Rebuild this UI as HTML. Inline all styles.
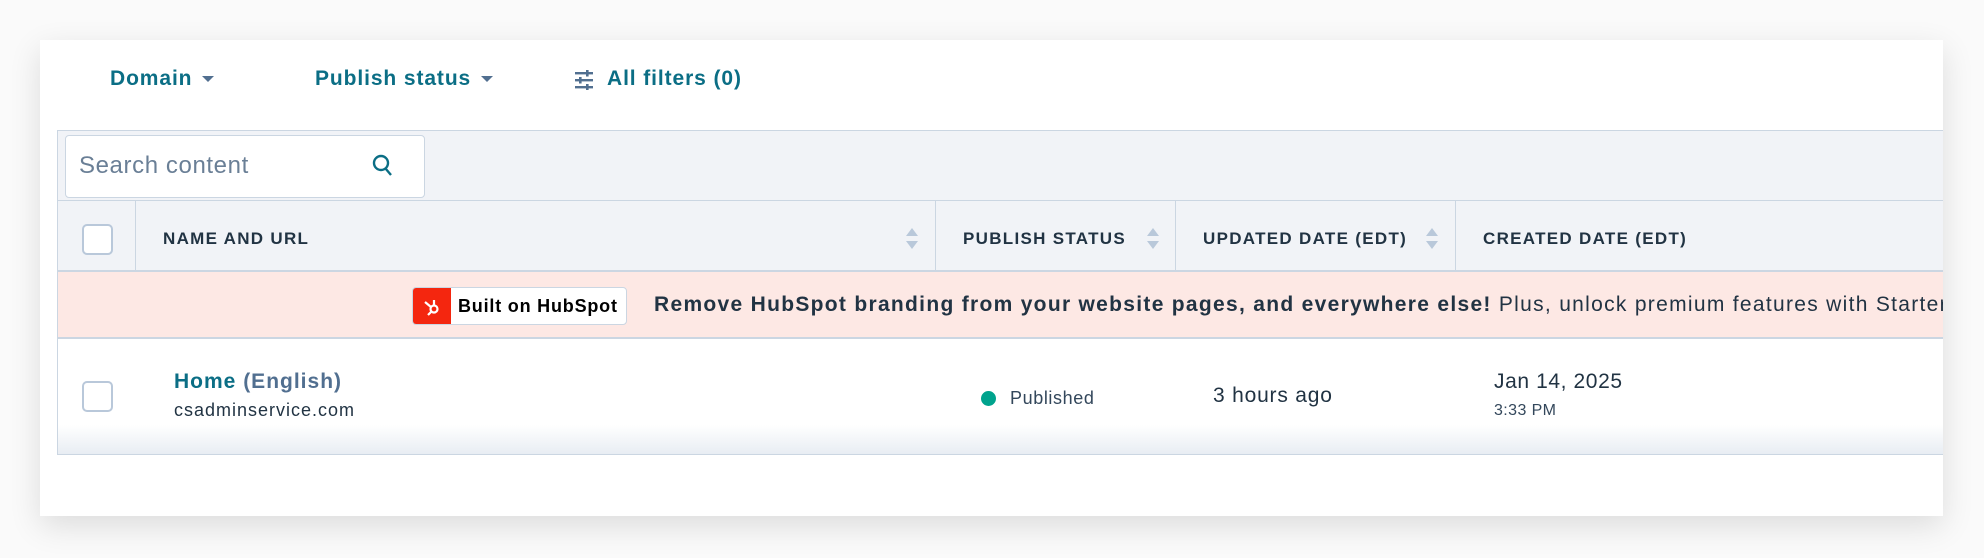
<!DOCTYPE html>
<html><head><meta charset="utf-8"><style>
*{margin:0;padding:0;box-sizing:border-box}
body{width:1984px;height:558px;background:#fafafa;font-family:"Liberation Sans",sans-serif;position:relative;overflow:hidden}
.card{position:absolute;left:40px;top:40px;width:1903px;height:476px;background:#fff;box-shadow:0 10px 30px rgba(0,0,0,.12)}
.a{position:absolute;white-space:nowrap}
.f{font-weight:bold;font-size:21px;color:#0b6e85;top:67px;letter-spacing:.9px}
.caret{display:inline-block;width:0;height:0;border-left:6px solid transparent;border-right:6px solid transparent;border-top:6px solid #516f90;margin-left:10px;vertical-align:middle}
.h{font-weight:bold;font-size:17px;color:#213343;top:229px;letter-spacing:1.3px}
.sort{position:absolute;width:12px;height:22px}
.sort:before{content:"";position:absolute;left:0;top:0;border-left:6px solid transparent;border-right:6px solid transparent;border-bottom:8px solid #b9c8da}
.sort:after{content:"";position:absolute;left:0;top:13px;border-left:6px solid transparent;border-right:6px solid transparent;border-top:8px solid #b9c8da}
</style></head><body>
<div class="card"></div>
<div class="a f" style="left:110px">Domain<span class="caret"></span></div>
<div class="a f" style="left:315px">Publish status<span class="caret"></span></div>
<svg class="a" style="left:574px;top:70px" width="20" height="20" viewBox="0 0 20 20" fill="#516f90"><rect x="1" y="2" width="18" height="2.4"/><rect x="1" y="9" width="18" height="2.4"/><rect x="1" y="16" width="18" height="2.4"/><rect x="12" y="0" width="2.6" height="6.5"/><rect x="5" y="7" width="2.6" height="6.5"/><rect x="12" y="14" width="2.6" height="6"/></svg>
<div class="a f" style="left:607px">All filters (0)</div>

<div class="a" style="left:57px;top:130px;width:1886px;height:325px;border:1px solid #cbd6e2;border-right:none;background:#fff"></div>
<div class="a" style="left:58px;top:131px;width:1885px;height:70px;background:#f1f3f7;border-bottom:1px solid #cbd6e2"></div>
<div class="a" style="left:65px;top:135px;width:360px;height:63px;background:#fff;border:1px solid #cbd6e2;border-radius:4px"></div>
<div class="a" style="left:79px;top:152px;font-size:24px;color:#6a7f96;letter-spacing:.6px">Search content</div>
<svg class="a" style="left:372px;top:154px" width="22" height="24" viewBox="0 0 22 24" fill="none" stroke="#0b6e85" stroke-width="2.4"><circle cx="9" cy="9" r="7"/><path d="M13.5 14.5L19 21"/></svg>
<div class="a" style="left:58px;top:201px;width:1885px;height:71px;background:#f1f3f7;border-bottom:2px solid #cbd6e2"></div>
<div class="a" style="left:135px;top:201px;width:1px;height:71px;background:#cbd6e2"></div>
<div class="a" style="left:935px;top:201px;width:1px;height:71px;background:#cbd6e2"></div>
<div class="a" style="left:1175px;top:201px;width:1px;height:71px;background:#cbd6e2"></div>
<div class="a" style="left:1455px;top:201px;width:1px;height:71px;background:#cbd6e2"></div>
<div class="a" style="left:82px;top:224px;width:31px;height:31px;border:2px solid #b9c8da;border-radius:5px;background:#fff"></div>
<div class="a h" style="left:163px">NAME AND URL</div>
<div class="sort" style="left:906px;top:228px"></div>
<div class="a h" style="left:963px">PUBLISH STATUS</div>
<div class="sort" style="left:1147px;top:228px"></div>
<div class="a h" style="left:1203px">UPDATED DATE (EDT)</div>
<div class="sort" style="left:1426px;top:228px"></div>
<div class="a h" style="left:1483px">CREATED DATE (EDT)</div>
<div class="a" style="left:58px;top:272px;width:1885px;height:67px;background:#fde8e4;border-bottom:2px solid #cbd6e2;overflow:hidden">
 <div style="position:absolute;left:596px;top:21px;font-size:21px;color:#213343;letter-spacing:1.3px;white-space:nowrap"><b>Remove HubSpot branding from your website pages, and everywhere else!</b> Plus, unlock premium features with Starter</div>
</div>
<div class="a" style="left:412px;top:287px;width:215px;height:38px;background:#fff;border:1px solid #cbd6e2;border-radius:4px;overflow:hidden">
 <div style="position:absolute;left:0;top:0;width:38px;height:38px;background:#f4260f"></div>
 <svg style="position:absolute;left:10px;top:9px" width="18" height="20" viewBox="0 0 18 20" fill="none" stroke="#fff" stroke-width="2.2"><circle cx="11" cy="12" r="3.5"/><path d="M11 8.5V3M8 10L2 5M8.5 14.5L5 18"/></svg>
 <div style="position:absolute;left:45px;top:8px;font-weight:bold;font-size:18px;color:#000;letter-spacing:.8px">Built on HubSpot</div>
</div>
<div class="a" style="left:58px;top:425px;width:1885px;height:29px;background:linear-gradient(#fff,#e8edf3)"></div>
<div class="a" style="left:82px;top:381px;width:31px;height:31px;border:2px solid #b9c8da;border-radius:5px;background:#fff"></div>
<div class="a" style="left:174px;top:370px;font-size:21px;font-weight:bold;color:#0b6e85;letter-spacing:1px">Home <span style="color:#516f90">(English)</span></div>
<div class="a" style="left:174px;top:400px;font-size:18px;color:#213343;letter-spacing:1px">csadminservice.com</div>
<div class="a" style="left:981px;top:391px;width:15px;height:15px;border-radius:50%;background:#00a38d"></div>
<div class="a" style="left:1010px;top:388px;font-size:18px;color:#33475b;letter-spacing:.6px">Published</div>
<div class="a" style="left:1213px;top:384px;font-size:21px;color:#213343;letter-spacing:.8px">3 hours ago</div>
<div class="a" style="left:1494px;top:370px;font-size:21px;color:#213343;letter-spacing:.6px">Jan 14, 2025</div>
<div class="a" style="left:1494px;top:402px;font-size:16px;color:#33475b;letter-spacing:.4px">3:33 PM</div>
</body></html>
